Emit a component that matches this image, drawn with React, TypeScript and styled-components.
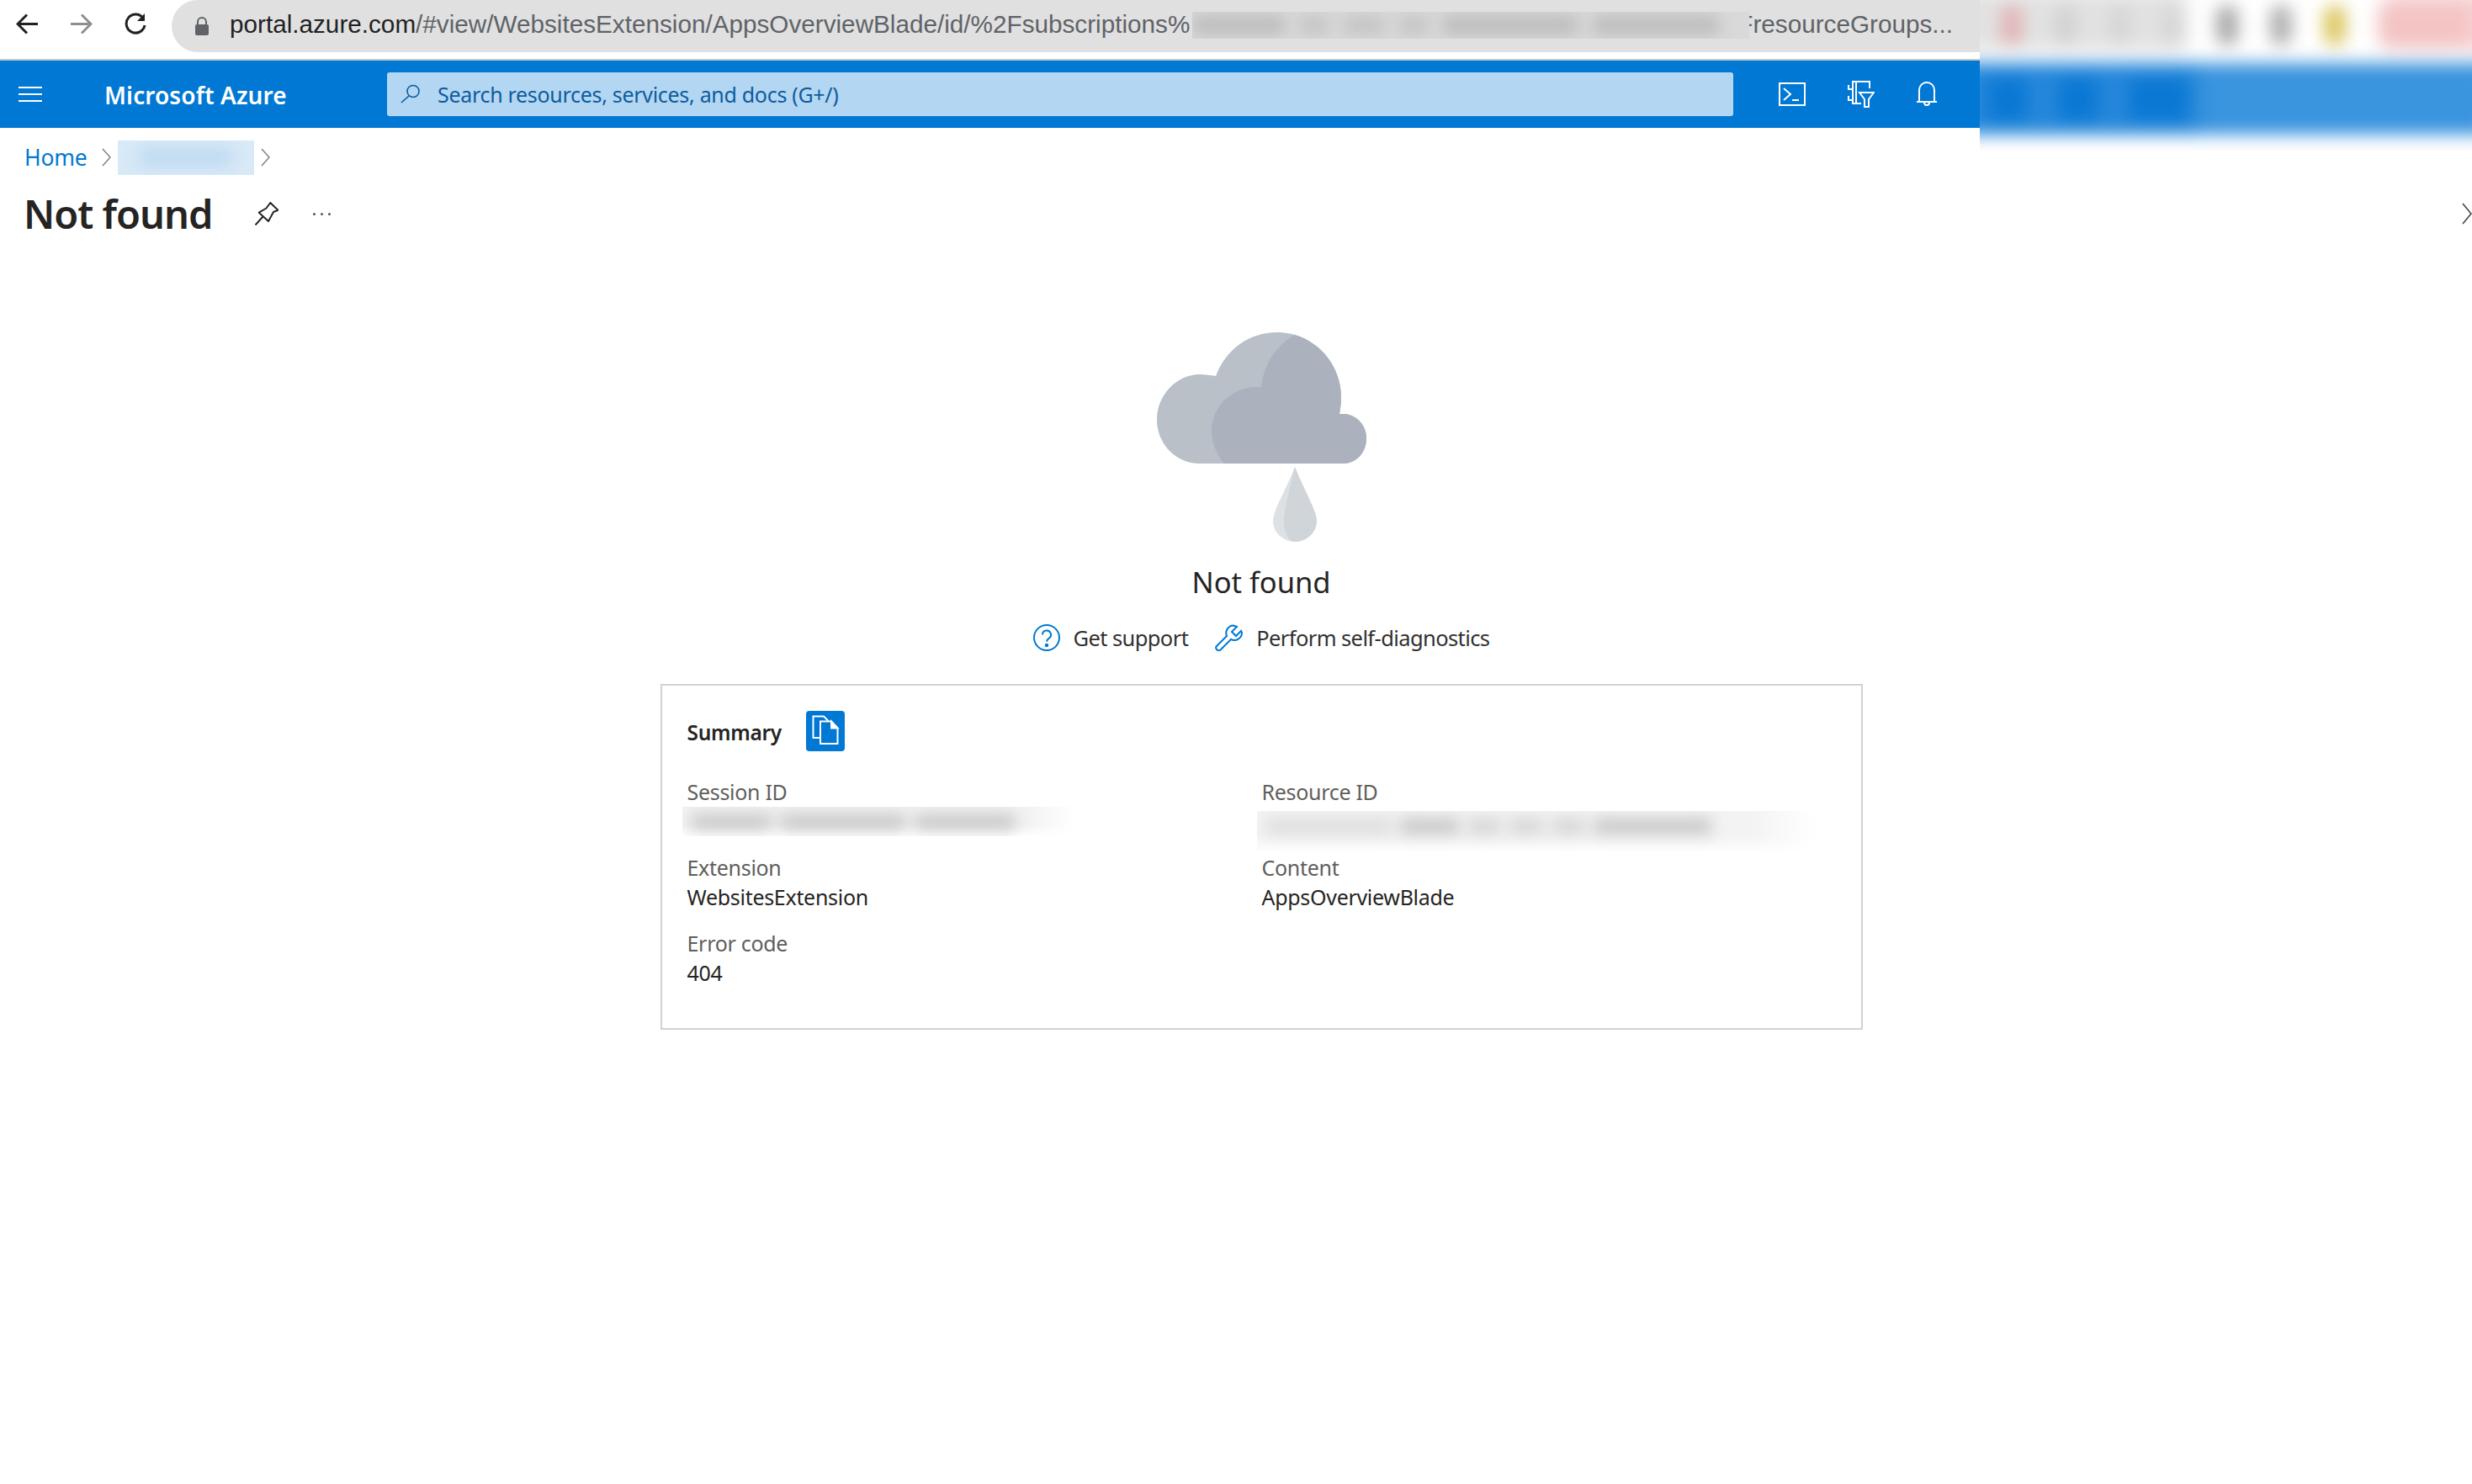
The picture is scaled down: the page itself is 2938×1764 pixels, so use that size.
import React from 'react';
import styled, { createGlobalStyle } from 'styled-components';

const GlobalStyle = createGlobalStyle`
  html, body {
    margin: 0;
    background: #fff;
  }
  body {
    font-family: "Noto Sans", "Open Sans", sans-serif;
    color: #323130;
    overflow: hidden;
  }
`;

const Page = styled.div`
  position: relative;
  width: 2938px;
  height: 1764px;
  overflow: hidden;
  background: #fff;
`;

/* browser chrome */
const Toolbar = styled.div`
  width: 2353px;
  height: 70px;
  display: flex;
  align-items: flex-start;
  background: #fff;
  border-bottom: 2px solid #c9c9c9;
`;

const ToolButtons = styled.div`
  width: 204px;
  height: 56px;
  flex-shrink: 0;
  display: flex;
  align-items: center;
  gap: 37px;
  padding-left: 19px;
  box-sizing: border-box;
`;

const AddressBar = styled.div`
  flex: 1;
  height: 62px;
  display: flex;
  align-items: center;
  background: #e0e0e0;
  border-radius: 31px 0 0 31px;
  padding-left: 27px;
  overflow: hidden;
`;

const LockIcon = styled.svg`
  width: 18px;
  height: 22px;
  flex-shrink: 0;
  margin-right: 24px;
`;

const UrlText = styled.span<{ $dark?: boolean }>`
  font-family: "Liberation Sans", Arial, sans-serif;
  font-size: 29.7px;
  margin-top: -5px;
  white-space: nowrap;
  color: ${(p) => (p.$dark ? '#202124' : '#5f6368')};
`;

const UrlRedacted = styled.span`
  width: 662px;
  height: 32px;
  flex-shrink: 0;
  margin: -2px -14px 0 3px;
  background: #d9d9d9;
  display: flex;
  align-items: center;
  gap: 18px;
  overflow: hidden;
  position: relative;
  z-index: 1;
`;

const Smudge = styled.span<{ $w: number; $h?: number; $c?: string; $blur?: number }>`
  width: ${(p) => p.$w}px;
  height: ${(p) => p.$h ?? 16}px;
  flex-shrink: 0;
  background: ${(p) => p.$c ?? '#bcbcbc'};
  border-radius: 4px;
  filter: blur(${(p) => p.$blur ?? 9}px);
`;

/* azure top bar */
const TopBar = styled.header`
  width: 2353px;
  height: 80px;
  display: flex;
  align-items: center;
  background: #0078d4;
  color: #fff;
  box-sizing: border-box;
`;

const MenuButton = styled.div`
  width: 124px;
  flex-shrink: 0;
  padding-left: 22px;
  box-sizing: border-box;
  display: flex;
`;

const Brand = styled.div`
  width: 336px;
  flex-shrink: 0;
  font-size: 28px;
  font-weight: 600;
  letter-spacing: 0.1px;
  margin-top: 2px;
`;

const SearchBox = styled.div`
  width: 1600px;
  height: 52px;
  flex-shrink: 0;
  display: flex;
  align-items: center;
  gap: 20px;
  padding: 0 0 1px 16px;
  box-sizing: border-box;
  background: #b3d6f2;
  border-radius: 3px;
  color: #0d5c9e;
  font-size: 25px;
  letter-spacing: -0.3px;
`;

const TopIcons = styled.div`
  display: flex;
  align-items: center;
  margin-left: 54px;
  gap: 50px;
`;

/* blurred corner of the screenshot */
const BlurredCorner = styled.div`
  position: absolute;
  top: 0;
  right: 0;
  width: 585px;
  height: 180px;
  overflow: hidden;
  background: #fff;
`;

const BlurInner = styled.div`
  width: 625px;
  margin: -10px 0 0 -20px;
  filter: blur(10px);
`;

const BlurTabs = styled.div`
  height: 70px;
  display: flex;
  align-items: center;
  gap: 38px;
  padding: 10px 0 0 45px;
  box-sizing: border-box;
  background: linear-gradient(90deg, #e2e2e2 0 255px, #fff 275px, #fff 490px, #f6d5d5 510px);
`;

const BlurDot = styled.span<{ $c: string; $w?: number }>`
  width: ${(p) => p.$w ?? 26}px;
  height: 48px;
  background: ${(p) => p.$c};
  border-radius: 12px;
  flex-shrink: 0;
`;

const BlurBar = styled.div`
  height: 85px;
  margin-top: 15px;
  display: flex;
  align-items: center;
  gap: 38px;
  padding-left: 30px;
  background: linear-gradient(90deg, #2587da 0 270px, #3a94de 290px, #3a94de 100%);
`;

const BlurBarSpot = styled.span<{ $w: number }>`
  width: ${(p) => p.$w}px;
  height: 50px;
  background: #0a78d4;
`;

/* page body */
const Breadcrumb = styled.nav`
  height: 58px;
  display: flex;
  align-items: center;
  padding: 2px 0 0 29px;
  font-size: 26.5px;
  color: #0078d4;
  box-sizing: border-box;
  margin-top: 5px;
  letter-spacing: -0.2px;
`;

const Crumb = styled.span`
  margin-right: 17px;
`;

const Chevron = styled.svg`
  width: 11px;
  height: 22px;
  flex-shrink: 0;
`;

const CrumbRedacted = styled.span`
  width: 162px;
  height: 41px;
  margin: 0 8px;
  flex-shrink: 0;
  display: flex;
  align-items: center;
  justify-content: center;
  background: #d8e9f7;
  overflow: hidden;
`;

const TitleRow = styled.div`
  height: 66px;
  display: flex;
  align-items: center;
  padding: 0 0 0 28px;
  margin-top: 6px;
`;

const Title = styled.h1`
  margin: 0 51px 0 0;
  font-size: 47px;
  font-weight: 600;
  color: #252423;
  letter-spacing: -1px;
`;

const Ellipsis = styled.span`
  margin-left: 41px;
  display: flex;
  gap: 6px;
`;

const Dot = styled.i`
  width: 3px;
  height: 3px;
  border-radius: 50%;
  background: #555;
`;

const CollapseChevron = styled.svg`
  width: 12px;
  height: 26px;
  margin-left: auto;
`;

const Content = styled.main`
  display: flex;
  flex-direction: column;
  align-items: center;
  padding: 108px 0 0 60px;
`;

const Heading = styled.h2`
  margin: 23px 0 0;
  font-size: 34.5px;
  line-height: 50px;
  font-weight: 400;
  color: #252423;
`;

const LinkRow = styled.div`
  display: flex;
  align-items: center;
  gap: 32px;
  margin-top: 21px;
  height: 40px;
`;

const SupportLink = styled.span`
  display: flex;
  align-items: center;
  gap: 16px;
  font-size: 25.5px;
  letter-spacing: -0.6px;
  color: #323130;
`;

const SummaryBox = styled.section`
  width: 1429px;
  height: 411px;
  margin-top: 35px;
  padding: 29px 30px 0;
  box-sizing: border-box;
  border: 2px solid #d2d2d2;
`;

const SummaryHeader = styled.div`
  display: flex;
  align-items: center;
  gap: 29px;
  height: 50px;
`;

const SummaryTitle = styled.h3`
  margin: 2px 0 0;
  font-size: 24.5px;
  font-weight: 600;
  color: #252423;
  letter-spacing: -0.3px;
`;

const CopyButton = styled.button`
  width: 46px;
  height: 48px;
  padding: 0;
  border: 0;
  border-radius: 4px;
  background: #0078d4;
  display: flex;
`;

const FieldGrid = styled.div`
  display: grid;
  grid-template-columns: 683px 1fr;
  grid-auto-rows: 90px;
  margin-top: 30px;
`;

const Field = styled.div`
  height: 90px;
`;

const FieldLabel = styled.div`
  font-size: 25px;
  line-height: 35px;
  letter-spacing: -0.3px;
  color: #605e5c;
`;

const FieldValue = styled.div`
  font-size: 25px;
  line-height: 35px;
  letter-spacing: -0.3px;
  color: #252423;
`;

const Redacted = styled.div<{ $w: number; $h: number; $top: number }>`
  width: ${(p) => p.$w}px;
  height: ${(p) => p.$h}px;
  margin: ${(p) => p.$top}px 0 0 -6px;
  display: flex;
  align-items: flex-start;
  gap: 10px;
  padding: 9px 0 0 10px;
  box-sizing: border-box;
  background: linear-gradient(180deg, #f3f3f3 60%, #fff);
  mask-image: linear-gradient(90deg, #000 88%, transparent);
  overflow: hidden;
`;

const ArrowIcon = ({ color, flip }: { color: string; flip?: boolean }) => (
  <svg width="27" height="25" viewBox="0 0 27 25" fill="none" stroke={color} strokeWidth="3">
    {flip ? <path d="M1 12.5H25M14 1.5l11 11-11 11" /> : <path d="M26 12.5H2M13 1.5l-11 11 11 11" />}
  </svg>
);

const ReloadIcon = () => (
  <svg width="28" height="26" viewBox="0 0 28 26" fill="none">
    <path d="M23 6.5A11 11 0 1 0 25 15" stroke="#202124" strokeWidth="3" />
    <path d="M25 1v9h-9z" fill="#202124" />
  </svg>
);

const FilterDirectoryIcon = () => (
  <svg width="32" height="32" viewBox="0 0 32 32" fill="none" stroke="#fff" strokeWidth="2">
    <path d="M26 9V1H6v26h10" />
    <path d="M10 1v26" />
    <path d="M1 5v5h5M1 18v5h5" />
    <path d="M14 14h17l-6 8v9h-5v-9z" />
  </svg>
);

const App: React.FC = () => {
  return (
    <Page>
      <GlobalStyle />
      <Toolbar>
        <ToolButtons>
          <ArrowIcon color="#202124" />
          <ArrowIcon color="#8f8f8f" flip />
          <ReloadIcon />
        </ToolButtons>
        <AddressBar>
          <LockIcon viewBox="0 0 18 22">
            <path d="M4 9V6a5 5 0 0 1 10 0v3" fill="none" stroke="#5f6368" strokeWidth="2" />
            <rect x="1" y="9" width="16" height="13" rx="2" fill="#5f6368" />
          </LockIcon>
          <UrlText $dark>portal.azure.com</UrlText>
          <UrlText>/#view/WebsitesExtension/AppsOverviewBlade/id/%2Fsubscriptions%</UrlText>
          <UrlRedacted>
            <Smudge $w={110} $h={22} />
            <Smudge $w={34} $h={22} $c="#c4c4c4" />
            <Smudge $w={48} $h={22} $c="#c4c4c4" />
            <Smudge $w={34} $h={22} $c="#c4c4c4" />
            <Smudge $w={160} $h={22} />
            <Smudge $w={150} $h={22} />
          </UrlRedacted>
          <UrlText>FresourceGroups...</UrlText>
        </AddressBar>
      </Toolbar>
      <TopBar>
        <MenuButton>
          <svg width="28" height="18" viewBox="0 0 28 18" fill="none" stroke="#fff" strokeWidth="2">
            <path d="M0 1h28M0 9h28M0 17h28" />
          </svg>
        </MenuButton>
        <Brand>Microsoft Azure</Brand>
        <SearchBox>
          <svg width="24" height="23" viewBox="0 0 24 23" fill="none" stroke="#0d5c9e" strokeWidth="1.6">
            <circle cx="15" cy="8.5" r="7" />
            <path d="M10 14 1 22" />
          </svg>
          Search resources, services, and docs (G+/)
        </SearchBox>
        <TopIcons>
          <svg width="32" height="28" viewBox="0 0 32 28" fill="none" stroke="#fff" strokeWidth="2">
            <rect x="1" y="1" width="30" height="26" />
            <path d="M6 7l8 7-8 7" />
            <path d="M16 21h8" />
          </svg>
          <FilterDirectoryIcon />
          <svg width="24" height="30" viewBox="0 0 24 30" fill="none" stroke="#fff" strokeWidth="2">
            <path d="M3 23V10a9 9 0 0 1 18 0v13" />
            <path d="M0 24h24" />
            <path d="M9 25a3 3 0 0 0 6 0" />
          </svg>
        </TopIcons>
      </TopBar>

      <BlurredCorner>
        <BlurInner>
          <BlurTabs>
            <BlurDot $c="#e2b4b6" />
            <BlurDot $c="#d2d2d2" />
            <BlurDot $c="#d6d6d6" />
            <BlurDot $c="#d6d6d6" />
            <BlurDot $c="#a9a9a9" />
            <BlurDot $c="#b0b0b0" />
            <BlurDot $c="#dcc660" />
            <BlurDot $c="#f4c4c4" $w={110} />
          </BlurTabs>
          <BlurBar>
            <BlurBarSpot $w={46} />
            <BlurBarSpot $w={46} />
            <BlurBarSpot $w={70} />
          </BlurBar>
        </BlurInner>
      </BlurredCorner>

      <Breadcrumb>
        <Crumb>Home</Crumb>
        <Chevron viewBox="0 0 11 22" fill="none" stroke="#7a7876" strokeWidth="1.3">
          <path d="M1 1l9 10-9 10" />
        </Chevron>
        <CrumbRedacted>
          <Smudge $w={110} $h={20} $c="#bcd9f1" />
        </CrumbRedacted>
        <Chevron viewBox="0 0 11 22" fill="none" stroke="#7a7876" strokeWidth="1.3">
          <path d="M1 1l9 10-9 10" />
        </Chevron>
      </Breadcrumb>

      <TitleRow>
        <Title>Not found</Title>
        <svg width="28" height="28" viewBox="0 0 28 28" fill="none" stroke="#252423" strokeWidth="2" strokeLinejoin="round">
          <path d="M18.3 1 27.4 9.8 22 12 16 23 4.8 12.7 13.5 7.5z" />
          <path d="M9.5 17.5 0.5 27.5" />
        </svg>
        <Ellipsis>
          <Dot />
          <Dot />
          <Dot />
        </Ellipsis>
        <CollapseChevron viewBox="0 0 12 26" fill="none" stroke="#444" strokeWidth="1.6">
          <path d="M1 1l10 12L1 25" />
        </CollapseChevron>
      </TitleRow>

      <Content>
        <svg width="249" height="249" viewBox="0 0 249 249">
          <path
            fill="#b9c0c8"
            d="M51 156C23 156 0 133 0 104C0 75 23 50 51 50C57 50 64 51 70 52C82 20 110 0 143 0C185 0 219 35 219 77C219 84 218 91 217 97H221C237 97 249 110 249 126C249 143 237 156 221 156Z"
          />
          <path
            fill="#abb2bd"
            d="M164 3C195 12 219 42 219 77C219 84 218 91 217 97H221C237 97 249 110 249 126C249 143 237 156 221 156H80C71 145 65 132 65 117C65 88 90 65 118 65L124 65C127 37 142 15 164 3Z"
          />
          <path
            fill="#dde1e4"
            d="M164 160C174 186 190 212 190 224C190 238 178 249 164 249C150 249 138 238 138 224C138 212 154 186 164 160Z"
          />
          <path
            fill="#d0d5d9"
            d="M164 160C174 186 190 212 190 224C190 238 178 249 164 249C157 249 151 238 151 224C151 212 158 186 164 160Z"
          />
        </svg>
        <Heading>Not found</Heading>
        <LinkRow>
          <SupportLink>
            <svg width="32" height="32" viewBox="0 0 32 32" fill="none" stroke="#0078d4" strokeWidth="2">
              <circle cx="16" cy="16" r="15" />
              <path d="M11 12.5a5 5 0 1 1 7.5 4.3c-1.6 1-2.5 2-2.5 4" />
              <circle cx="16" cy="25" r="1.2" fill="#0078d4" />
            </svg>
            Get support
          </SupportLink>
          <SupportLink>
            <svg width="33" height="32" viewBox="0 0 33 32" fill="none" stroke="#0078d4" strokeWidth="2">
              <path d="M22 1.5a9 9 0 0 0-8 12.5L2 26a3.2 3.2 0 0 0 4.5 4.5L19 18a9 9 0 0 0 13-8l-1-2-6 6-5-5 6-6z" />
            </svg>
            Perform self-diagnostics
          </SupportLink>
        </LinkRow>

        <SummaryBox>
          <SummaryHeader>
            <SummaryTitle>Summary</SummaryTitle>
            <CopyButton aria-label="Copy">
              <svg width="46" height="48" viewBox="0 0 46 48" fill="none" stroke="#fff" strokeWidth="2">
                <path d="M16 32H8.5V6.5H21l5.5 5.5" />
                <path d="M17 12.5h13l7.5 8V39H17z" />
                <path d="M30 12.5v8h7.5z" fill="#fff" />
              </svg>
            </CopyButton>
          </SummaryHeader>
          <FieldGrid>
            <Field>
              <FieldLabel>Session ID</FieldLabel>
              <Redacted $w={468} $h={35} $top={0}>
                <Smudge $w={96} $h={18} $c="#c6c6c6" />
                <Smudge $w={150} $h={18} $c="#c6c6c6" />
                <Smudge $w={120} $h={18} $c="#c6c6c6" />
              </Redacted>
            </Field>
            <Field>
              <FieldLabel>Resource ID</FieldLabel>
              <Redacted $w={665} $h={50} $top={5}>
                <Smudge $w={150} $h={18} $c="#dcdcdc" />
                <Smudge $w={70} $h={18} $c="#c6c6c6" />
                <Smudge $w={40} $h={18} $c="#d4d4d4" />
                <Smudge $w={40} $h={18} $c="#d4d4d4" />
                <Smudge $w={40} $h={18} $c="#d4d4d4" />
                <Smudge $w={140} $h={18} $c="#c6c6c6" />
              </Redacted>
            </Field>
            <Field>
              <FieldLabel>Extension</FieldLabel>
              <FieldValue>WebsitesExtension</FieldValue>
            </Field>
            <Field>
              <FieldLabel>Content</FieldLabel>
              <FieldValue>AppsOverviewBlade</FieldValue>
            </Field>
            <Field>
              <FieldLabel>Error code</FieldLabel>
              <FieldValue>404</FieldValue>
            </Field>
          </FieldGrid>
        </SummaryBox>
      </Content>
    </Page>
  );
};

export default App;
